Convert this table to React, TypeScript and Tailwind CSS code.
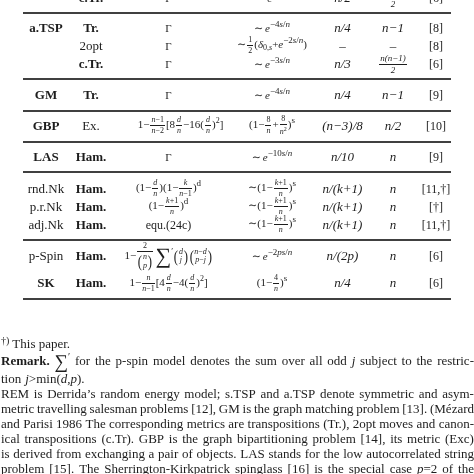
import React from "react";

type N = React.ReactNode;

function Fr({ n, d, size = "text-[8px]" }: { n: N; d: N; size?: string }) {
  return (
    <span className={`inline-flex flex-col items-center align-middle leading-[1] mx-[1px] ${size}`}>
      <span className="px-[1px] pb-[1px]">{n}</span>
      <span className="self-stretch border-t border-current text-center pt-[1px]">{d}</span>
    </span>
  );
}

function Sup({ children, size = "text-[9px]" }: { children: N; size?: string }) {
  return <span className={`leading-none [vertical-align:5px] ${size}`}>{children}</span>;
}

function Sub({ children }: { children: N }) {
  return <span className="text-[8px] leading-none [vertical-align:-2px]">{children}</span>;
}

function Binom({ t, b }: { t: N; b: N }) {
  return (
    <span className="inline-flex items-center align-middle">
      <span className="text-[17px] leading-none scale-x-75">(</span>
      <span className="inline-flex flex-col items-center leading-[1.05] text-[8px]">
        <span>{t}</span>
        <span>{b}</span>
      </span>
      <span className="text-[17px] leading-none scale-x-75">)</span>
    </span>
  );
}

const I = ({ children }: { children: N }) => <i className="italic">{children}</i>;

const expE = (s: N) => (
  <>
    ∼<span className="ml-[2px] italic">e</span>
    <Sup>{s}</Sup>
  </>
);

const k1n = <Fr n={<><I>k</I>+1</>} d={<I>n</I>} />;

type RowT = {
  c1?: N;
  b1?: boolean;
  c2?: N;
  b2?: boolean;
  c3?: N;
  c4?: N;
  c5?: N;
  c6?: N;
  c7?: N;
  h: string;
};

function Row({ r }: { r: RowT }) {
  return (
    <div
      className={`grid grid-cols-[46px_44px_111px_96px_45px_56px_30px] items-center justify-items-center ${r.h}`}
    >
      <div className={`whitespace-nowrap text-[13px] ${r.b1 ? "font-bold" : ""}`}>{r.c1}</div>
      <div className={`whitespace-nowrap text-[13px] ${r.b2 ? "font-bold" : ""}`}>{r.c2}</div>
      <div className="whitespace-nowrap text-[11px]">{r.c3}</div>
      <div className="whitespace-nowrap text-[11px]">{r.c4}</div>
      <div className="whitespace-nowrap text-[13px] italic">{r.c5}</div>
      <div className="whitespace-nowrap text-[13px] italic">{r.c6}</div>
      <div className="whitespace-nowrap text-[12px]">{r.c7}</div>
    </div>
  );
}

const Rule = () => <div className="h-[2px] bg-[#404040]" />;

const nn1 = (
  <Fr
    size="text-[9px]"
    n={
      <>
        <I>n</I>(<I>n</I>−1)
      </>
    }
    d="2"
  />
);

const dn = <Fr n={<I>d</I>} d={<I>n</I>} />;

function Line({ words, justify = true }: { words: N[]; justify?: boolean }) {
  return (
    <div
      className={`h-[15px] leading-[15px] flex items-baseline whitespace-nowrap ${
        justify ? "justify-between" : "gap-[4px]"
      }`}
    >
      {words.map((w, i) => (
        <span key={i}>{w}</span>
      ))}
    </div>
  );
}

const sp = (s: string) => s.split(" ");

export default function App() {
  return (
    <div className="w-[474px] h-[474px] overflow-hidden bg-white text-[#1d1d1d] font-['Liberation_Serif','DejaVu_Serif',serif] blur-[0.3px]">
      <div className="-mt-[13px] ml-[23px] w-[428px]">
        <Row
          r={{
            c2: "c.Tr.",
            b2: true,
            c3: "Γ",
            c4: expE(<>−<I>s</I>/<I>n</I></>),
            c5: <>n/2</>,
            c6: nn1,
            c7: "[6]",
            h: "h-[18px]",
          }}
        />
        <div className="h-[7px]" />
        <Rule />
        <div className="pt-[4px] h-[64px]">
          <Row
            r={{
              c1: "a.TSP",
              b1: true,
              c2: "Tr.",
              b2: true,
              c3: "Γ",
              c4: expE(<>−4<I>s</I>/<I>n</I></>),
              c5: "n/4",
              c6: "n−1",
              c7: "[8]",
              h: "h-[18px]",
            }}
          />
          <Row
            r={{
              c2: "2opt",
              c3: "Γ",
              c4: (
                <>
                  ∼<Fr n="1" d="2" />(<I>δ</I>
                  <Sub>
                    0,<I>s</I>
                  </Sub>
                  +<I>e</I>
                  <Sup>
                    −2<I>s</I>/<I>n</I>
                  </Sup>
                  )
                </>
              ),
              c5: <span className="not-italic">–</span>,
              c6: <span className="not-italic">–</span>,
              c7: "[8]",
              h: "h-[17px]",
            }}
          />
          <Row
            r={{
              c2: "c.Tr.",
              b2: true,
              c3: "Γ",
              c4: expE(<>−3<I>s</I>/<I>n</I></>),
              c5: "n/3",
              c6: nn1,
              c7: "[6]",
              h: "h-[19px]",
            }}
          />
        </div>
        <Rule />
        <Row
          r={{
            c1: "GM",
            b1: true,
            c2: "Tr.",
            b2: true,
            c3: "Γ",
            c4: expE(<>−4<I>s</I>/<I>n</I></>),
            c5: "n/4",
            c6: "n−1",
            c7: "[9]",
            h: "h-[30px]",
          }}
        />
        <Rule />
        <div className="h-[29px] pb-[2px]">
          <Row
            r={{
              c1: "GBP",
              b1: true,
              c2: "Ex.",
              c3: (
                <span className="pl-[24px]">
                  1−<Fr n={<><I>n</I>−1</>} d={<><I>n</I>−2</>} />[8{dn}−16({dn})<Sup size="text-[8px]">2</Sup>]
                </span>
              ),
              c4: (
                <>
                  (1−<Fr n="8" d={<I>n</I>} />+
                  <Fr
                    n="8"
                    d={
                      <>
                        <I>n</I>
                        <span className="text-[6px] [vertical-align:3px]">2</span>
                      </>
                    }
                  />
                  )<Sup>s</Sup>
                </>
              ),
              c5: "(n−3)/8",
              c6: "n/2",
              c7: "[10]",
              h: "h-[27px]",
            }}
          />
        </div>
        <Rule />
        <Row
          r={{
            c1: "LAS",
            b1: true,
            c2: "Ham.",
            b2: true,
            c3: "Γ",
            c4: expE(<>−10<I>s</I>/<I>n</I></>),
            c5: "n/10",
            c6: "n",
            c7: "[9]",
            h: "h-[28px]",
          }}
        />
        <Rule />
        <div className="pt-[6px] h-[66px]">
          <Row
            r={{
              c1: "rnd.Nk",
              c2: "Ham.",
              b2: true,
              c3: (
                <>
                  (1−{dn})(1−<Fr n={<I>k</I>} d={<><I>n</I>−1</>} />)<Sup>d</Sup>
                </>
              ),
              c4: (
                <>
                  ∼(1−{k1n})<Sup>s</Sup>
                </>
              ),
              c5: "n/(k+1)",
              c6: "n",
              c7: "[11,†]",
              h: "h-[18px]",
            }}
          />
          <Row
            r={{
              c1: "p.r.Nk",
              c2: "Ham.",
              b2: true,
              c3: (
                <>
                  (1−{k1n})<Sup>d</Sup>
                </>
              ),
              c4: (
                <>
                  ∼(1−{k1n})<Sup>s</Sup>
                </>
              ),
              c5: "n/(k+1)",
              c6: "n",
              c7: "[†]",
              h: "h-[18px]",
            }}
          />
          <Row
            r={{
              c1: "adj.Nk",
              c2: "Ham.",
              b2: true,
              c3: <span className="text-[12px]">equ.(24c)</span>,
              c4: (
                <>
                  ∼(1−{k1n})<Sup>s</Sup>
                </>
              ),
              c5: "n/(k+1)",
              c6: "n",
              c7: "[11,†]",
              h: "h-[18px]",
            }}
          />
        </div>
        <Rule />
        <div className="pt-[1px] h-[57px]">
          <Row
            r={{
              c1: "p-Spin",
              c2: "Ham.",
              b2: true,
              c3: (
                <>
                  1−
                  <Fr n="2" d={<Binom t={<I>n</I>} b={<I>p</I>} />} />
                  <span className="text-[22px] leading-none align-middle ml-[2px]">∑</span>
                  <Sup size="text-[9px]">′</Sup>
                  <Binom t={<I>d</I>} b={<I>j</I>} />
                  <Binom t={<><I>n</I>−<I>d</I></>} b={<><I>p</I>−<I>j</I></>} />
                </>
              ),
              c4: expE(<>−2<I>ps</I>/<I>n</I></>),
              c5: "n/(2p)",
              c6: "n",
              c7: "[6]",
              h: "h-[26px]",
            }}
          />
          <Row
            r={{
              c1: "SK",
              b1: true,
              c2: "Ham.",
              b2: true,
              c3: (
                <>
                  1−<Fr n={<I>n</I>} d={<><I>n</I>−1</>} />[4{dn}−4({dn})<Sup size="text-[8px]">2</Sup>]
                </>
              ),
              c4: (
                <>
                  (1−<Fr n="4" d={<I>n</I>} />)<Sup>s</Sup>
                </>
              ),
              c5: "n/4",
              c6: "n",
              c7: "[6]",
              h: "h-[30px]",
            }}
          />
        </div>
        <Rule />
      </div>

      <div className="mt-[33px] text-[13px] pl-[1px]">
        <div className="h-[15px] leading-[15px] whitespace-nowrap">
          <span className="text-[10px] [vertical-align:4px]">†)</span> This paper.
        </div>
        <div className="h-[3px]" />
        <div className="h-[20px] flex items-center justify-between whitespace-nowrap">
          <span className="font-bold">Remark.</span>
          <span>
            <span className="text-[19px] leading-none">∑</span>
            <span className="text-[10px] [vertical-align:8px]">′</span>
          </span>
          {sp("for the p-spin model denotes the sum over all odd").map((w, i) => (
            <span key={i}>{w}</span>
          ))}
          <I>j</I>
          {sp("subject to the restric-").map((w, i) => (
            <span key={"b" + i}>{w}</span>
          ))}
        </div>
        <Line
          justify={false}
          words={[
            "tion",
            <>
              <I>j</I>{">"}min(<I>d</I>,<I>p</I>).
            </>,
          ]}
        />
        <Line words={sp("REM is Derrida’s random energy model; s.TSP and a.TSP denote symmetric and asym-")} />
        <Line words={sp("metric travelling salesman problems [12], GM is the graph matching problem [13]. (Mézard")} />
        <Line words={sp("and Parisi 1986 The corresponding metrics are transpositions (Tr.), 2opt moves and canon-")} />
        <Line words={sp("ical transpositions (c.Tr). GBP is the graph bipartitioning problem [14], its metric (Exc)")} />
        <Line words={sp("is derived from exchanging a pair of objects. LAS stands for the low autocorrelated string")} />
        <Line
          words={[
            ...sp("problem [15]. The Sherrington-Kirkpatrick spinglass [16] is the special case"),
            <>
              <I>p</I>=2
            </>,
            "of",
            "the",
          ]}
        />
      </div>
    </div>
  );
}
